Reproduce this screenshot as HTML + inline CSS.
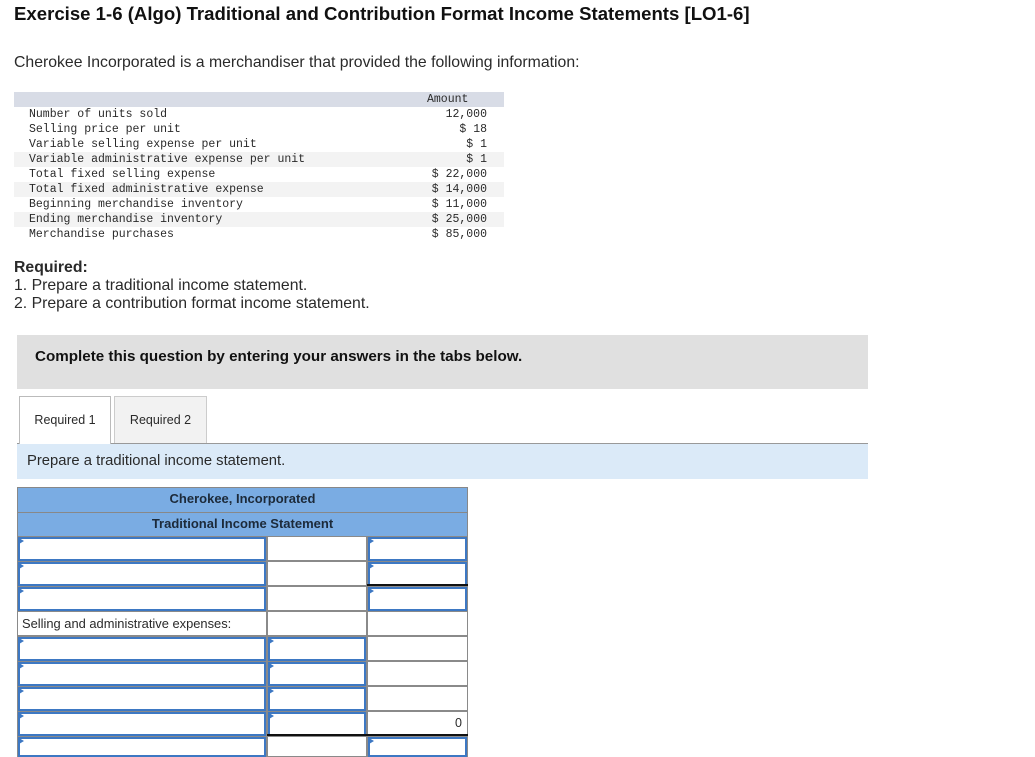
<!DOCTYPE html>
<html><head><style>
body{margin:0;width:1035px;height:757px;overflow:hidden;background:#fff;font-family:"Liberation Sans",sans-serif;position:relative;color:#2a2a2a}
.a{position:absolute}
h1{position:absolute;left:14px;top:3px;margin:0;font-size:18.6px;font-weight:bold;color:#111;white-space:nowrap}
.mono{font-family:"Liberation Mono",monospace;font-size:11.5px;line-height:15px}
.cell{position:absolute;box-sizing:border-box;border:1px solid #8a8a8a;background:#fff}
.inp{position:absolute;box-sizing:border-box;border:2px solid #3d78c3;background:#fff}
.inp:before{content:"";position:absolute;left:-1px;top:-1px;border-left:5px solid #3d78c3;border-top:3px solid transparent;border-bottom:3px solid transparent}
</style></head><body>
<h1>Exercise 1-6 (Algo) Traditional and Contribution Format Income Statements [LO1-6]</h1>
<div class="a" style="left:14px;top:54px;font-size:15.8px;white-space:nowrap">Cherokee Incorporated is a merchandiser that provided the following information:</div>
<div class="a" style="left:14px;top:92px;width:490px;height:15px;background:#d8dce6"></div>
<div class="a" style="left:14px;top:152px;width:490px;height:15px;background:#f3f3f3"></div>
<div class="a" style="left:14px;top:182px;width:490px;height:15px;background:#f3f3f3"></div>
<div class="a" style="left:14px;top:212px;width:490px;height:15px;background:#f3f3f3"></div>
<div class="a mono" style="left:427px;top:92px">Amount</div>
<div class="a mono" style="left:29px;top:107px;white-space:pre">Number of units sold
Selling price per unit
Variable selling expense per unit
Variable administrative expense per unit
Total fixed selling expense
Total fixed administrative expense
Beginning merchandise inventory
Ending merchandise inventory
Merchandise purchases</div>
<div class="a mono" style="left:400px;width:87px;top:107px;text-align:right;white-space:pre">12,000
$ 18
$ 1
$ 1
$ 22,000
$ 14,000
$ 11,000
$ 25,000
$ 85,000</div>
<div class="a" style="left:14px;top:259px;font-size:15.8px;line-height:18px;white-space:nowrap"><b>Required:</b><br>1. Prepare a traditional income statement.<br>2. Prepare a contribution format income statement.</div>
<div class="a" style="left:17px;top:335px;width:851px;height:54px;background:#e0e0e0"></div>
<div class="a" style="left:35px;top:348px;font-size:15.2px;font-weight:bold;line-height:18px;white-space:nowrap;color:#111">Complete this question by entering your answers in the tabs below.</div>
<div class="a" style="left:17px;top:443px;width:851px;height:1px;background:#999"></div>
<div class="a" style="left:17px;top:444px;width:851px;height:35px;background:#dbeaf8"></div>
<div class="a" style="left:19px;top:396px;width:92px;height:48px;box-sizing:border-box;border:1px solid #bbb;border-bottom:none;background:#fff;font-size:12.5px;text-align:center;line-height:46px">Required 1</div>
<div class="a" style="left:114px;top:396px;width:93px;height:47px;box-sizing:border-box;border:1px solid #ccc;border-bottom:none;background:#f2f2f2;font-size:12.5px;text-align:center;line-height:46px">Required 2</div>
<div class="a" style="left:27px;top:453px;font-size:14.8px;white-space:nowrap">Prepare a traditional income statement.</div>

<div class="a" style="left:17px;top:487px;width:451px;height:50px;box-sizing:border-box;border:1px solid #888;background:#7aace3"></div>
<div class="a" style="left:17px;top:512px;width:451px;height:1px;background:#888"></div>
<div class="a" style="left:17px;top:491px;width:451px;text-align:center;font-size:13px;font-weight:bold;color:#1c2a3a">Cherokee, Incorporated</div>
<div class="a" style="left:17px;top:516px;width:451px;text-align:center;font-size:13px;font-weight:bold;color:#1c2a3a">Traditional Income Statement</div>

<div id="g"></div>
<script>
var rows=[['i','c','i'],['i','c','i'],['i','c','i'],['l','c','c'],['i','i','c'],['i','i','c'],['i','i','c'],['i','i','z'],['i','c','i']];
var xs=[17,267,367],ws=[250,100,101],h='';
rows.forEach(function(r,ri){var y=536+ri*25;r.forEach(function(t,ci){
var st='left:'+xs[ci]+'px;top:'+y+'px;width:'+ws[ci]+'px;height:'+(ri==8?21:25)+'px';
h+='<div class="cell" style="'+st+'"></div>';
if(t=='i')h+='<div class="inp" style="left:'+(xs[ci]+1)+'px;top:'+(y+1)+'px;width:'+(ws[ci]-2)+'px;height:'+(ri==8?20:24)+'px"></div>';
if(t=='l')h+='<div class="a" style="left:22px;top:'+(y+5)+'px;font-size:12.9px;white-space:nowrap">Selling and administrative expenses:</div>';
if(t=='z')h+='<div class="a" style="left:'+xs[ci]+'px;width:'+(ws[ci]-6)+'px;text-align:right;top:'+(y+5)+'px;font-size:12.5px">0</div>';
});});
h+='<div class="a" style="left:367px;top:584px;width:101px;height:2px;background:#111"></div>';
h+='<div class="a" style="left:267px;top:734px;width:201px;height:2px;background:#111"></div>';
document.getElementById('g').innerHTML=h;
</script>
</body></html>
